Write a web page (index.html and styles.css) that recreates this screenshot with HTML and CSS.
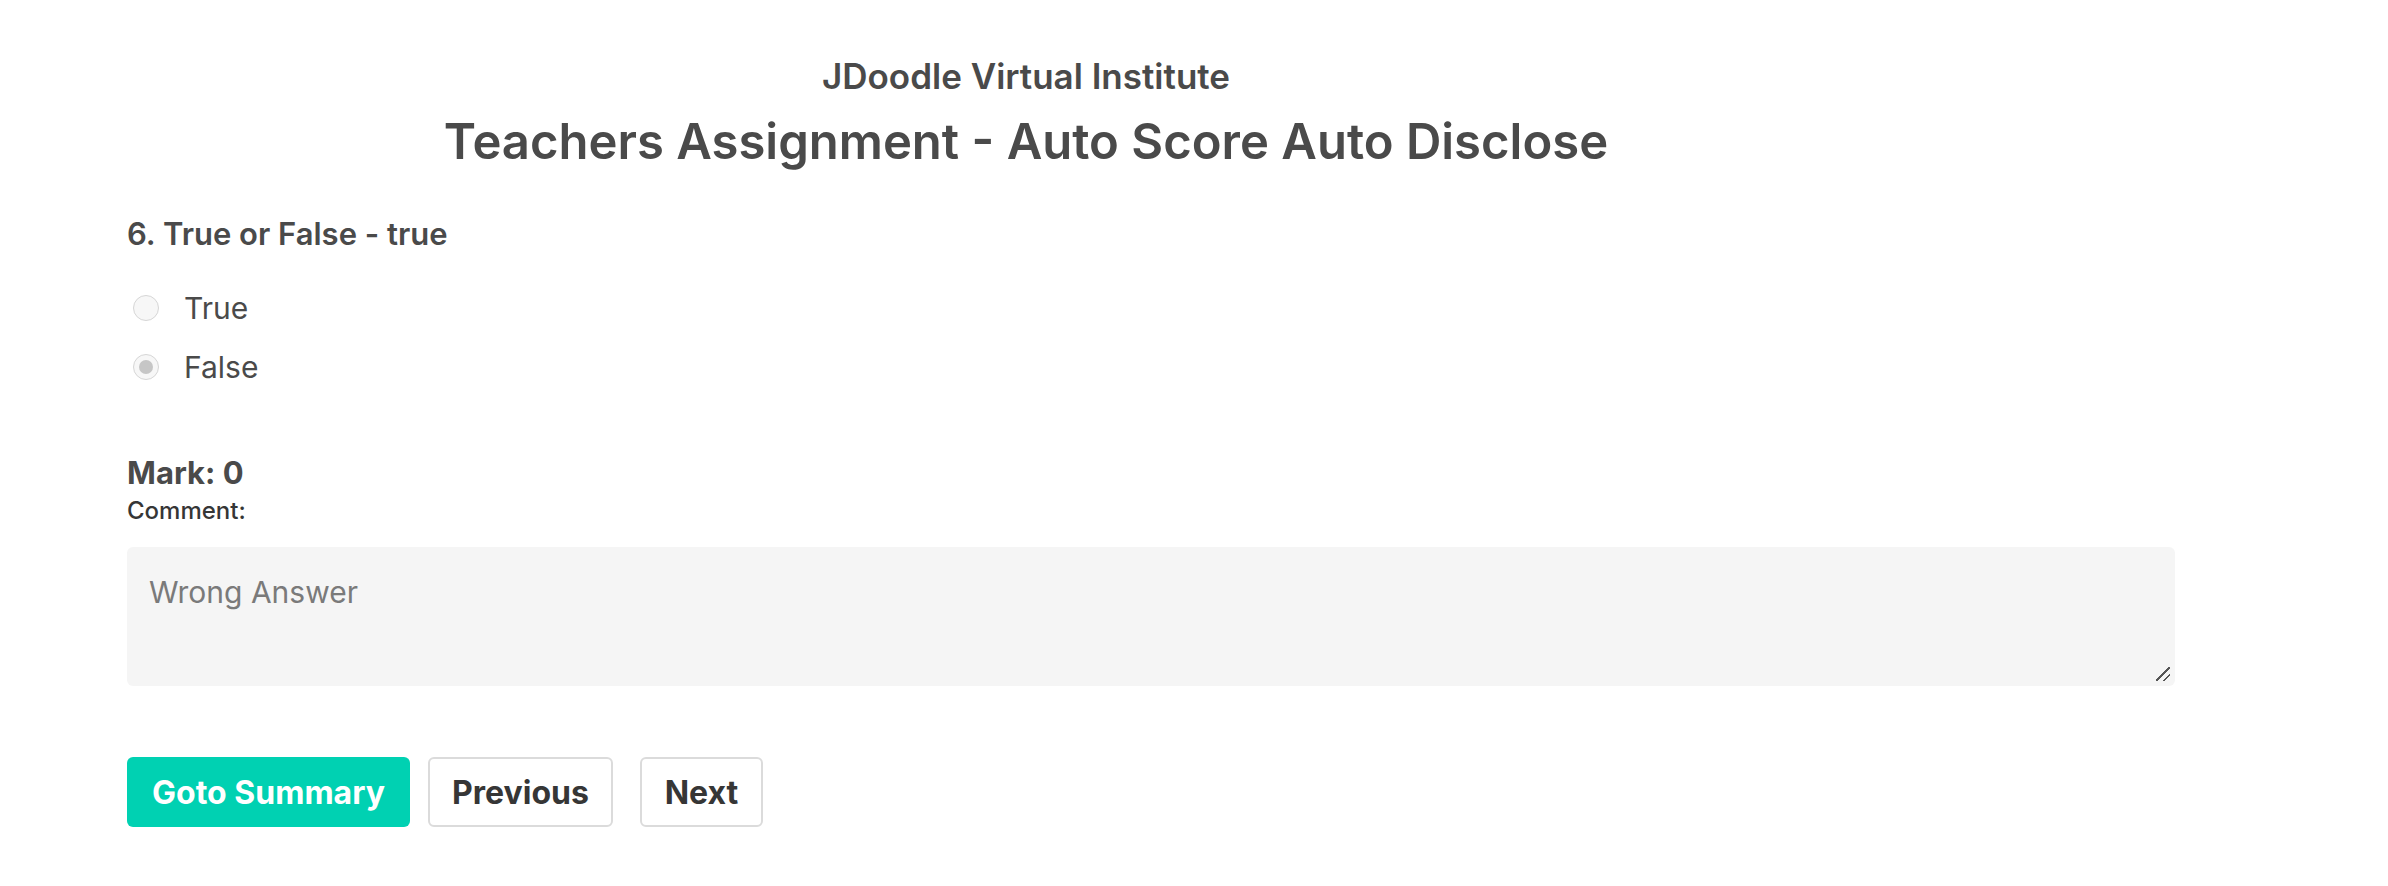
FILE: index.html
```html
<!DOCTYPE html>
<html lang="en">
<head>
<meta charset="utf-8">
<title>Teachers Assignment - Auto Score Auto Disclose</title>
<link rel="stylesheet" href="styles.css">
</head>
<body>
<div class="page">
  <header class="head">
    <div class="institute">JDoodle Virtual Institute</div>
    <h1 class="title">Teachers Assignment - Auto Score Auto Disclose</h1>
  </header>
  <section class="question">
    <div class="q-title">6. True or False - true</div>
    <div class="options">
      <label class="option"><span class="radio"></span><span class="opt-text">True</span></label>
      <label class="option"><span class="radio checked"></span><span class="opt-text">False</span></label>
    </div>
    <div class="mark">Mark: 0</div>
    <div class="comment-label">Comment:</div>
    <div class="textarea">Wrong Answer<span class="grip"></span></div>
    <div class="buttons">
      <button class="btn primary">Goto Summary</button>
      <button class="btn">Previous</button>
      <button class="btn next">Next</button>
    </div>
  </section>
</div>
</body>
</html>
```

FILE: styles.css
```css
* { box-sizing: border-box; }
html, body { margin: 0; padding: 0; background: #fff; }
body {
  font-family: Inter, "Noto Sans", "Liberation Sans", sans-serif;
  color: #4a4a4a;
}
.page { padding: 0 0 0 127px; }
.head {
  width: 1798px;
  text-align: center;
  padding-top: 53px;
}
.institute {
  font-size: 35px;
  font-weight: 600;
  line-height: 46px;
}
.title {
  margin: 0;
  padding-top: 13px;
  font-size: 49px;
  font-weight: 600;
  line-height: 60px;
  color: #4a4a4a;
}
.question { width: 2048px; padding-top: 42px; }
.q-title {
  font-size: 31px;
  font-weight: 600;
  line-height: 40px;
}
.options { padding-top: 33px; display: flex; flex-direction: column; gap: 17px; }
.option { display: flex; align-items: center; height: 42px; }
.radio {
  width: 26px; height: 26px;
  margin-left: 6px;
  border-radius: 50%;
  border: 1.5px solid #d6d6d6;
  background: #f7f7f7;
  display: flex; align-items: center; justify-content: center;
}
.radio.checked::after {
  content: "";
  width: 14px; height: 14px;
  border-radius: 50%;
  background: #c6c6c6;
}
.opt-text {
  margin-left: 25px;
  font-size: 30px;
  line-height: 42px;
}
.mark {
  padding-top: 67px;
  font-size: 31px;
  font-weight: 700;
  line-height: 36px;
}
.comment-label {
  margin-top: 5px;
  font-size: 24px;
  font-weight: 500;
  line-height: 30px;
  color: #363636;
}
.textarea {
  position: relative;
  margin-top: 21px;
  height: 139px;
  background: #f5f5f5;
  border-radius: 6px;
  padding: 25px 22px;
  font-size: 30px;
  line-height: 40px;
  color: #7a7a7a;
}
.grip {
  position: absolute;
  right: 5px; bottom: 5px;
  width: 14px; height: 14px;
  background:
    linear-gradient(135deg, transparent 45%, #555 45%, #555 55%, transparent 55%, transparent 72%, #555 72%, #555 82%, transparent 82%);
}
.buttons { display: flex; padding-top: 71px; }
.btn {
  height: 70px;
  padding: 0;
  font-family: inherit;
  font-size: 32px;
  font-weight: 700;
  color: #363636;
  background: #fff;
  border: 2px solid #dbdbdb;
  border-radius: 6px;
  margin-right: 18px;
}
.btn.primary {
  background: #00d1b2;
  border-color: transparent;
  color: #fff;
  width: 283px;
}
.btn:nth-child(2) { width: 185px; margin-right: 27px; }
.btn.next { width: 123px; }
```
